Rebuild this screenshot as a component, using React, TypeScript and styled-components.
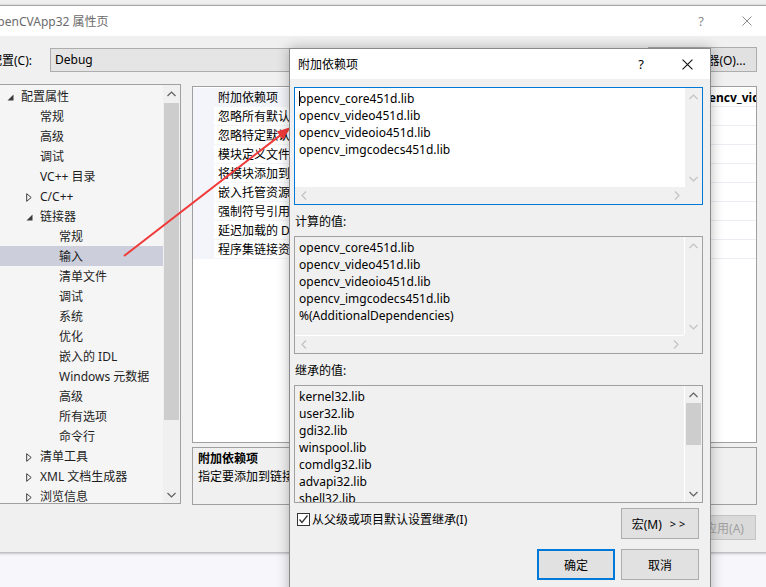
import React from 'react';
import styled, { createGlobalStyle } from 'styled-components';

const UI_FONT = `"Noto Sans", "Noto Sans CJK SC", sans-serif`;

const GlobalStyle = createGlobalStyle`
  * { box-sizing: border-box; }
  html, body {
    margin: 0;
    padding: 0;
    width: 766px;
    height: 587px;
    overflow: hidden;
  }
  body {
    background: linear-gradient(#efefef 0 5px, #f7f7fb 5px);
    font-family: ${UI_FONT};
    font-size: 12px;
    color: #000;
  }
`;

const Desktop = styled.div`
  position: relative;
  width: 766px;
  height: 587px;
  overflow: hidden;
`;

/* ---------- shared bits ---------- */

const TitleButton = styled.div<{ $dim?: boolean }>`
  width: 46px;
  height: 100%;
  display: flex;
  align-items: center;
  justify-content: center;
  font-size: 13px;
  color: ${p => (p.$dim ? '#8a8a8a' : '#000')};
`;

const Button = styled.div<{ $width: number; $height: number; $default?: boolean; $disabled?: boolean }>`
  width: ${p => p.$width}px;
  height: ${p => p.$height}px;
  display: flex;
  align-items: center;
  justify-content: center;
  background: ${p => (p.$disabled ? '#dadada' : '#e1e1e1')};
  border: ${p => (p.$default ? '2px solid #0078d7' : `1px solid ${p.$disabled ? '#c4c4c4' : '#adadad'}`)};
  color: ${p => (p.$disabled ? '#a0a0a0' : '#000')};
  white-space: nowrap;
  overflow: hidden;
  flex: none;
`;

type Dir = 'up' | 'down' | 'left' | 'right';

const Chevron: React.FC<{ dir: Dir; color: string }> = ({ dir, color }) => {
  const vertical = dir === 'up' || dir === 'down';
  const points = {
    up: '0.5,5 4.5,1 8.5,5',
    down: '0.5,1 4.5,5 8.5,1',
    left: '5,0.5 1,4.5 5,8.5',
    right: '1,0.5 5,4.5 1,8.5',
  }[dir];
  return (
    <svg width={vertical ? 9 : 6} height={vertical ? 6 : 9} viewBox={vertical ? '0 0 9 6' : '0 0 6 9'}>
      <polyline points={points} fill="none" stroke={color} strokeWidth="1.2" />
    </svg>
  );
};

const CloseGlyph: React.FC<{ color: string; size: number }> = ({ color, size }) => (
  <svg width={size} height={size} viewBox="0 0 10 10">
    <path d="M0.5 0.5 L9.5 9.5 M9.5 0.5 L0.5 9.5" stroke={color} strokeWidth="1" fill="none" />
  </svg>
);

const VBar = styled.div<{ $sep?: boolean }>`
  display: flex;
  flex-direction: column;
  background: #f0f0f0;
  border-left: ${p => (p.$sep ? '1px solid #fff' : 'none')};
  min-height: 0;
`;

const HBar = styled.div<{ $sep?: boolean }>`
  display: flex;
  justify-content: space-between;
  background: #f0f0f0;
  border-top: ${p => (p.$sep ? '1px solid #fff' : 'none')};
`;

const ArrowCell = styled.div`
  width: 17px;
  height: 17px;
  flex: none;
  display: flex;
  align-items: center;
  justify-content: center;
`;

const Track = styled.div`
  flex: 1;
  min-height: 0;
`;

const Thumb = styled.div<{ $offset: number; $size: number }>`
  margin: ${p => p.$offset}px 1px 0 1px;
  height: ${p => p.$size}px;
  background: #cdcdcd;
`;

const Corner = styled.div`
  background: #f0f0f0;
`;

const VScroll: React.FC<{ color: string; sep?: boolean; thumb?: [number, number] }> = ({ color, sep, thumb }) => (
  <VBar $sep={sep}>
    <ArrowCell>
      <Chevron dir="up" color={color} />
    </ArrowCell>
    <Track>{thumb && <Thumb $offset={thumb[0]} $size={thumb[1]} />}</Track>
    <ArrowCell>
      <Chevron dir="down" color={color} />
    </ArrowCell>
  </VBar>
);

const HScroll: React.FC<{ color: string; sep?: boolean }> = ({ color, sep }) => (
  <HBar $sep={sep}>
    <ArrowCell>
      <Chevron dir="left" color={color} />
    </ArrowCell>
    <ArrowCell>
      <Chevron dir="right" color={color} />
    </ArrowCell>
  </HBar>
);

/* ---------- main property window ---------- */

const MainWindow = styled.div`
  position: absolute;
  left: -20px;
  top: 5px;
  width: 790px;
  height: 547px;
  background: #f0f0f0;
  border-top: 1px solid #a6a6a6;
  box-shadow: 0 1px 3px rgba(0, 0, 0, 0.35);
  display: flex;
  flex-direction: column;
`;

const WindowTitleBar = styled.div`
  height: 30px;
  flex: none;
  background: #fff;
  display: flex;
  align-items: center;
  padding-left: 8px;
`;

const WindowTitle = styled.div`
  flex: 1;
  color: #6b6b6b;
  font-size: 12px;
`;

const WindowBody = styled.div`
  flex: 1;
  padding: 0 13px 0 10px;
  display: flex;
  flex-direction: column;
`;

const ConfigRow = styled.div`
  margin-top: 11px;
  height: 25px;
  display: flex;
  align-items: center;
`;

const ConfigLabel = styled.div`
  width: 60px;
`;

const ComboBox = styled.div`
  width: 260px;
  height: 24px;
  background: #e5e5e5;
  border: 1px solid #adadad;
  padding-left: 4px;
  display: flex;
  align-items: center;
`;

const Spacer = styled.div`
  flex: 1;
`;

const MainArea = styled.div`
  margin-top: 12px;
  display: flex;
  gap: 11px;
`;

const TreePanel = styled.div`
  width: 191px;
  height: 420px;
  background: #f5f5f5;
  border: 1px solid #a0a0a0;
  display: grid;
  grid-template-columns: 1fr 17px;
  overflow: hidden;
`;

const TreeList = styled.div`
  padding-top: 1px;
  overflow: hidden;
`;

const TreeRow = styled.div<{ $indent: number; $selected?: boolean }>`
  height: 20px;
  padding-top: 2px;
  line-height: 18px;
  padding-left: ${p => p.$indent}px;
  background: ${p => (p.$selected ? '#cccedb' : 'transparent')};
  color: #1e1e1e;
  display: flex;
  align-items: center;
  white-space: nowrap;
`;

const Expander = styled.span`
  width: 14px;
  flex: none;
  display: flex;
  align-items: center;
`;

const ExpandIcon: React.FC<{ open: boolean }> = ({ open }) =>
  open ? (
    <svg width="7" height="7" viewBox="0 0 7 7">
      <polygon points="6.5,0.5 6.5,6.5 0.5,6.5" fill="#3c3c3c" />
    </svg>
  ) : (
    <svg width="6" height="9" viewBox="0 0 6 9">
      <polygon points="0.7,0.7 5.2,4.5 0.7,8.3" fill="none" stroke="#3c3c3c" strokeWidth="1" />
    </svg>
  );

const RightPane = styled.div`
  flex: 1;
  display: flex;
  flex-direction: column;
  gap: 4px;
`;

const PropGrid = styled.div`
  margin-top: 2px;
  height: 357px;
  background: #fff;
  border: 1px solid #a0a0a0;
  padding-top: 1px;
  overflow: hidden;
`;

const PropRow = styled.div`
  height: 19px;
  display: grid;
  grid-template-columns: 21px 352px 1fr;
`;

const Gutter = styled.div`
  background: #f3f5fa;
`;

const PropName = styled.div<{ $selected?: boolean }>`
  background: ${p => (p.$selected ? '#f3f5fa' : '#fff')};
  border-bottom: 1px solid #f3f5fa;
  padding: 1px 0 0 4px;
  line-height: 18px;
  white-space: nowrap;
  overflow: hidden;
`;

const PropValue = styled.div`
  border-bottom: 1px solid #ebedf2;
  padding: 1px 0 0 4px;
  line-height: 17px;
  font-weight: bold;
  white-space: nowrap;
  overflow: hidden;
`;

const DescBox = styled.div`
  height: 58px;
  border: 1px solid #a0a0a0;
  padding: 2px 5px;
  line-height: 18px;
  white-space: nowrap;
  overflow: hidden;
`;

const DescTitle = styled.div`
  font-weight: bold;
`;

const WindowFooter = styled.div`
  margin-top: 10px;
  display: flex;
  justify-content: flex-end;
  padding-right: 1px;
`;

/* ---------- annotation arrow ---------- */

const ArrowLayer = styled.svg`
  position: absolute;
  left: 0;
  top: 0;
  pointer-events: none;
`;

/* ---------- modal dialog ---------- */

const Dialog = styled.div`
  position: absolute;
  left: 289px;
  top: 48px;
  width: 422px;
  height: 580px;
  background: #f0f0f0;
  border: 1px solid #8a8a8a;
  box-shadow: 0 0 12px rgba(0, 0, 0, 0.28);
  display: flex;
  flex-direction: column;
`;

const DialogTitleBar = styled.div`
  height: 30px;
  flex: none;
  background: #fff;
  display: flex;
  align-items: center;
  padding-left: 8px;
`;

const DialogTitle = styled.div`
  flex: 1;
`;

const DialogBody = styled.div`
  padding: 0 7px 0 4px;
  display: flex;
  flex-direction: column;
`;

const ListBox = styled.div<{ $focused?: boolean; $disabled?: boolean; $hbar?: boolean; $gap: number }>`
  margin-top: ${p => p.$gap}px;
  height: 118px;
  border: 1px solid ${p => (p.$focused ? '#0078d7' : '#a0a0a0')};
  background: ${p => (p.$disabled ? '#f0f0f0' : '#fff')};
  display: grid;
  grid-template-columns: 1fr ${p => (p.$disabled ? 18 : 17)}px;
  grid-template-rows: ${p => (p.$hbar ? `1fr ${p.$disabled ? 18 : 17}px` : '1fr')};
  overflow: hidden;
`;

const ListLines = styled.div`
  padding: 2px 4px;
  line-height: 17px;
  white-space: nowrap;
  overflow: hidden;
  min-height: 0;
`;

const Caret = styled.span`
  display: inline-block;
  width: 1px;
  height: 15px;
  background: #000;
  margin-right: -1px;
  vertical-align: -3px;
`;

const FieldLabel = styled.div`
  height: 31px;
  padding-top: 9px;
  line-height: 16px;
  padding-left: 1px;
`;

const FooterRow = styled.div<{ $gap: number }>`
  margin-top: ${p => p.$gap}px;
  display: flex;
  align-items: flex-start;
  padding-right: 4px;
  gap: 6px;
`;

const CheckLabel = styled.label`
  margin-top: 4px;
  padding-left: 3px;
  display: flex;
  align-items: center;
  gap: 2px;
  line-height: 15px;
`;

const CheckBox = styled.span`
  width: 13px;
  height: 13px;
  border: 1px solid #333;
  background: #fff;
  display: flex;
  align-items: center;
  justify-content: center;
`;

const Arrows = styled.span`
  margin-left: 8px;
  letter-spacing: 3px;
  font-size: 11px;
`;

/* ---------- data ---------- */

type TreeItem = { label: string; level: number; expander?: 'open' | 'closed'; selected?: boolean };

const treeItems: TreeItem[] = [
  { label: '配置属性', level: 0, expander: 'open' },
  { label: '常规', level: 1 },
  { label: '高级', level: 1 },
  { label: '调试', level: 1 },
  { label: 'VC++ 目录', level: 1 },
  { label: 'C/C++', level: 1, expander: 'closed' },
  { label: '链接器', level: 1, expander: 'open' },
  { label: '常规', level: 2 },
  { label: '输入', level: 2, selected: true },
  { label: '清单文件', level: 2 },
  { label: '调试', level: 2 },
  { label: '系统', level: 2 },
  { label: '优化', level: 2 },
  { label: '嵌入的 IDL', level: 2 },
  { label: 'Windows 元数据', level: 2 },
  { label: '高级', level: 2 },
  { label: '所有选项', level: 2 },
  { label: '命令行', level: 2 },
  { label: '清单工具', level: 1, expander: 'closed' },
  { label: 'XML 文档生成器', level: 1, expander: 'closed' },
  { label: '浏览信息', level: 1, expander: 'closed' },
];

const linkerProps = [
  '附加依赖项',
  '忽略所有默认库',
  '忽略特定默认库',
  '模块定义文件',
  '将模块添加到程序集',
  '嵌入托管资源文件',
  '强制符号引用',
  '延迟加载的 DLL',
  '程序集链接资源',
];

const deps = ['opencv_core451d.lib', 'opencv_video451d.lib', 'opencv_videoio451d.lib', 'opencv_imgcodecs451d.lib'];

const inherited = [
  'kernel32.lib',
  'user32.lib',
  'gdi32.lib',
  'winspool.lib',
  'comdlg32.lib',
  'advapi32.lib',
  'shell32.lib',
  'ole32.lib',
];

/* ---------- app ---------- */

const App: React.FC = () => {
  // arrow from the tree's "输入" row up to the dialog
  const tip = { x: 291, y: 127 };
  const tail = { x: 124, y: 256 };
  const len = Math.hypot(tip.x - tail.x, tip.y - tail.y);
  const ux = (tip.x - tail.x) / len;
  const uy = (tip.y - tail.y) / len;
  const bx = tip.x - ux * 14;
  const by = tip.y - uy * 14;
  const head = `${tip.x},${tip.y} ${bx - uy * 5},${by + ux * 5} ${bx + uy * 5},${by - ux * 5}`;

  return (
    <Desktop>
      <GlobalStyle />
      <MainWindow>
        <WindowTitleBar>
          <WindowTitle>OpenCVApp32 属性页</WindowTitle>
          <TitleButton $dim>?</TitleButton>
          <TitleButton $dim>
            <CloseGlyph color="#8a8a8a" size={10} />
          </TitleButton>
        </WindowTitleBar>
        <WindowBody>
          <ConfigRow>
            <ConfigLabel>配置(C):</ConfigLabel>
            <ComboBox>Debug</ComboBox>
            <Spacer />
            <Button $width={109} $height={25}>
              配置管理器(O)...
            </Button>
          </ConfigRow>
          <MainArea>
            <TreePanel>
              <TreeList>
                {treeItems.map((item, i) => (
                  <TreeRow
                    key={i}
                    $indent={30 + item.level * 19 - (item.expander ? 14 : 0)}
                    $selected={item.selected}
                  >
                    {item.expander && (
                      <Expander>
                        <ExpandIcon open={item.expander === 'open'} />
                      </Expander>
                    )}
                    {item.label}
                  </TreeRow>
                ))}
              </TreeList>
              <VScroll color="#606060" thumb={[1, 317]} />
            </TreePanel>
            <RightPane>
              <PropGrid>
                {linkerProps.map((name, i) => (
                  <PropRow key={i}>
                    <Gutter />
                    <PropName $selected={i === 0}>{name}</PropName>
                    <PropValue>{i === 0 ? `${deps.join(';')};%(AdditionalDependencies)` : ''}</PropValue>
                  </PropRow>
                ))}
              </PropGrid>
              <DescBox>
                <DescTitle>附加依赖项</DescTitle>
                <div>指定要添加到链接命令行的附加项。[例如 kernel32.lib]</div>
              </DescBox>
            </RightPane>
          </MainArea>
          <WindowFooter>
            <Button $width={63} $height={25} $disabled>
              应用(A)
            </Button>
          </WindowFooter>
        </WindowBody>
      </MainWindow>

      <ArrowLayer width={766} height={587}>
        <line x1={tail.x} y1={tail.y} x2={bx + ux * 2} y2={by + uy * 2} stroke="#f03a3a" strokeWidth="2" />
        <polygon points={head} fill="#f03a3a" />
      </ArrowLayer>

      <Dialog>
        <DialogTitleBar>
          <DialogTitle>附加依赖项</DialogTitle>
          <TitleButton>?</TitleButton>
          <TitleButton>
            <CloseGlyph color="#111" size={11} />
          </TitleButton>
        </DialogTitleBar>
        <DialogBody>
          <ListBox $focused $hbar $gap={8}>
            <ListLines>
              {deps.map((d, i) => (
                <div key={d}>
                  {i === 0 && <Caret />}
                  {d}
                </div>
              ))}
            </ListLines>
            <VScroll color="#c2c2c2" />
            <HScroll color="#c2c2c2" />
            <Corner />
          </ListBox>

          <FieldLabel>计算的值:</FieldLabel>
          <ListBox $disabled $hbar $gap={0}>
            <ListLines>
              {deps.map(d => (
                <div key={d}>{d}</div>
              ))}
              <div>%(AdditionalDependencies)</div>
            </ListLines>
            <VScroll color="#c2c2c2" sep />
            <HScroll color="#c2c2c2" sep />
            <Corner />
          </ListBox>

          <FieldLabel>继承的值:</FieldLabel>
          <ListBox $disabled $gap={0}>
            <ListLines>
              {inherited.map(d => (
                <div key={d}>{d}</div>
              ))}
            </ListLines>
            <VScroll color="#606060" sep thumb={[0, 42]} />
          </ListBox>

          <FooterRow $gap={5}>
            <CheckLabel>
              <CheckBox>
                <svg width="11" height="11" viewBox="0 0 11 11">
                  <polyline points="1.5,5.5 4,8.5 9.5,1.5" fill="none" stroke="#333" strokeWidth="1.3" />
                </svg>
              </CheckBox>
              从父级或项目默认设置继承(I)
            </CheckLabel>
            <Spacer />
            <Button $width={78} $height={31}>
              宏(M)<Arrows>&gt;&gt;</Arrows>
            </Button>
          </FooterRow>
          <FooterRow $gap={10}>
            <Spacer />
            <Button $width={78} $height={31} $default>
              确定
            </Button>
            <Button $width={78} $height={31}>
              取消
            </Button>
          </FooterRow>
        </DialogBody>
      </Dialog>
    </Desktop>
  );
};

export default App;
